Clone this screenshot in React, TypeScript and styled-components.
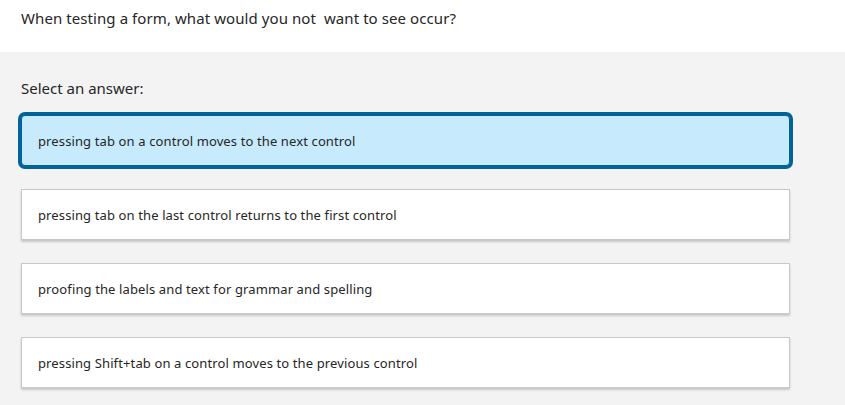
import styled, { createGlobalStyle } from 'styled-components';

const GlobalStyle = createGlobalStyle`
    html, body {
        margin: 0;
        padding: 0;
        background: #f3f3f3;
    }
    body {
        font-family: 'Noto Sans', 'Open Sans', sans-serif;
        color: #262626;
    }
`;

const answers = [
    'pressing tab on a control moves to the next control',
    'pressing tab on the last control returns to the first control',
    'proofing the labels and text for grammar and spelling',
    'pressing Shift+tab on a control moves to the previous control',
];

const App = () => {
    return (
        <>
            <GlobalStyle />
            <Page>
                <QuestionBar>
                    When testing a form, what would you not&nbsp; want to see occur?
                </QuestionBar>
                <AnswerArea>
                    <Prompt>Select an answer:</Prompt>
                    <AnswerList>
                        {answers.map((text, i) => (
                            <AnswerCard key={text} $selected={i === 0}>
                                {text}
                            </AnswerCard>
                        ))}
                    </AnswerList>
                </AnswerArea>
            </Page>
        </>
    );
};

export default App;

const Page = styled.div`
    width: 845px;
    min-height: 405px;
    display: flex;
    flex-direction: column;
`;

const QuestionBar = styled.div`
    background: #ffffff;
    height: 52px;
    box-sizing: border-box;
    padding: 7px 21px 0;
    font-size: 15px;
    line-height: 22px;
    letter-spacing: 0.08px;
`;

const AnswerArea = styled.div`
    background: #f3f3f3;
    padding: 25px 55px 20px 21px;
    display: flex;
    flex-direction: column;
`;

const Prompt = styled.div`
    font-size: 15px;
    line-height: 22px;
    margin-bottom: 16px;
`;

const AnswerList = styled.div`
    display: flex;
    flex-direction: column;
    gap: 23px;
`;

const AnswerCard = styled.div<{ $selected?: boolean }>`
    height: 51px;
    box-sizing: border-box;
    display: flex;
    align-items: center;
    padding: 0 16px;
    font-size: 13px;
    letter-spacing: 0.12px;
    background: ${(p) => (p.$selected ? '#c7ebfd' : '#ffffff')};
    border: 1px solid ${(p) => (p.$selected ? '#00639a' : '#c8c8c8')};
    border-radius: ${(p) => (p.$selected ? '4px' : '0')};
    box-shadow: ${(p) =>
        p.$selected ? '0 0 0 3px #00639a' : '0 1.5px 2px rgba(0, 0, 0, 0.18)'};
`;
